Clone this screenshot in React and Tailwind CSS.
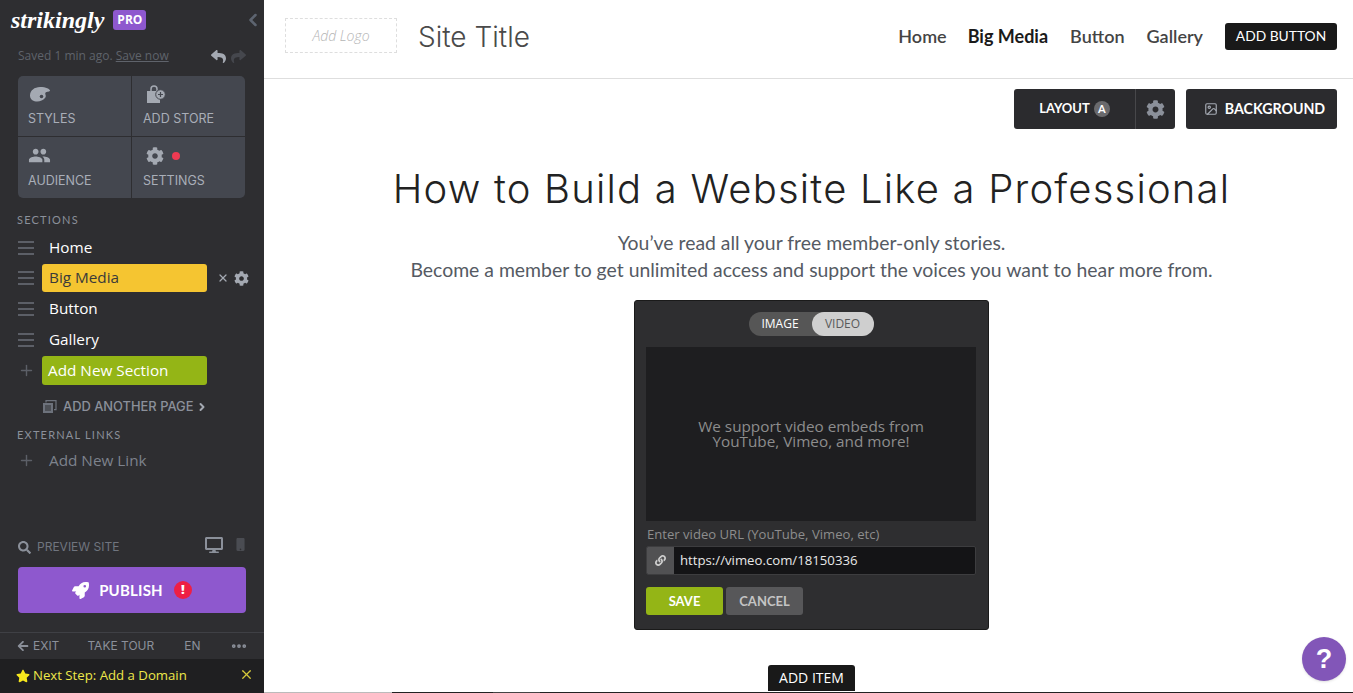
import React from 'react';
import { ChevronLeft, ChevronRight, X, Plus, Ellipsis, Image } from 'lucide-react';
import { FaReply, FaShare, FaCog, FaSearch, FaRocket, FaStar, FaArrowLeft, FaLink, FaDesktop, FaMobile } from 'react-icons/fa';
import { MdPeople } from 'react-icons/md';

const open = "font-['Open_Sans',sans-serif]";
const lato = "font-['Lato',sans-serif]";
const mont = "font-['Inter',sans-serif]";

function Palette() {
    return (
        <svg width="24" height="20" viewBox="0 0 24 20" className="block">
            <path fill="#a4a9b2" d="M12 2c6 0 10 2.200 10 3.600 0 1.500-3.500.9-4.500 2.100-1 1.300 1.500 3-.5 5.300C15 15.300 11.500 17 8 16.500 4 16 2 13.500 2 10.500 2 5.500 6.500 2 12 2z" />
            <circle cx="13.500" cy="11.500" r="1.800" fill="#44474f" />
        </svg>
    );
}

function StoreBag() {
    return (
        <svg width="22" height="20" viewBox="0 0 22 20" className="block">
            <path fill="none" stroke="#a4a9b2" strokeWidth="1.500" d="M6 6V4a3 3 0 0 1 6 0v2" />
            <path fill="#a4a9b2" d="M2 6h13v12H2z" />
            <circle cx="15.500" cy="9.500" r="4.800" fill="#a4a9b2" stroke="#44474f" strokeWidth="1" />
            <path stroke="#44474f" strokeWidth="1.200" d="M13 9.500h5M15.500 7v5" />
        </svg>
    );
}

function Cell({ icon, label, extra, pad = 'pl-[10px]', iconGap = 'mt-[6px] pl-0', labelGap = 'mt-[4px]' }) {
    return (
        <div className={`${pad} flex flex-col`}>
            <div className={`h-[25px] ${iconGap} flex items-center gap-[8px]`}>
                {icon}
                {extra}
            </div>
            <span className={`${mont} text-[12.500px] text-[#a9aeb8] ${labelGap} leading-4`}>{label}</span>
        </div>
    );
}

function Handle() {
    return (
        <div className="w-[16px] flex flex-col gap-[4px] shrink-0">
            <div className="h-[2px] bg-[#5c5f67]" />
            <div className="h-[2px] bg-[#5c5f67]" />
            <div className="h-[2px] bg-[#5c5f67]" />
        </div>
    );
}

function SectionRow({ label }) {
    return (
        <div className="h-[31px] flex items-center pl-[18px]">
            <Handle />
            <span className="ml-[15px] text-[15.300px] text-white">{label}</span>
        </div>
    );
}

function Sidebar() {
    return (
        <aside className={`${open} w-[264px] shrink-0 h-full bg-[#2e2e31] flex flex-col relative`}>
            <div className="h-[39px] flex items-center pl-[11px] pr-[1px]">
                <span className="font-['Liberation_Serif',serif] italic font-bold text-[24px] leading-none text-white">strikingly</span>
                <span className="ml-[9px] w-[33px] h-[20px] rounded-[3px] bg-[#8e58ce] text-white text-[12px] font-bold flex items-center justify-center">PRO</span>
                <ChevronLeft size={20} strokeWidth={3} className="ml-auto text-[#5d6470]" />
            </div>
            <div className="h-[30px] mt-[2px] flex items-center pl-[18px] pr-[18px] text-[12px] text-[#5f636b]">
                <span>Saved 1 min ago. <span className="underline">Save now</span></span>
                <FaReply size={15} className="ml-auto text-[#a4a9b2]" />
                <FaShare size={15} className="ml-[5px] text-[#45474d]" />
            </div>
            <div className="ml-[18px] mt-[5px] w-[227px] h-[122px] grid grid-cols-2 grid-rows-[60px_61px] gap-px bg-[#2e2e31] rounded-[5px] overflow-hidden [&>div]:bg-[#44474f]">
                <Cell icon={<Palette />} label="STYLES" />
                <Cell icon={<StoreBag />} label="ADD STORE" pad="pl-[11px]" iconGap="mt-[6px] pl-[2px]" />
                <Cell icon={<MdPeople size={23} className="text-[#a4a9b2]" />} label="AUDIENCE" labelGap="mt-[5px]" />
                <Cell
                    icon={<FaCog size={18} className="text-[#a4a9b2]" />}
                    label="SETTINGS"
                    pad="pl-[11px]"
                    iconGap="mt-[6px] pl-[3px]"
                    labelGap="mt-[5px]"
                    extra={<span className="w-[8px] h-[8px] rounded-full bg-[#ee3a52]" />}
                />
            </div>
            <div className={`${lato} ml-[17px] mt-[15px] text-[11px] tracking-[1.200px] text-[#8b909a] leading-[14px]`}>SECTIONS</div>
            <div className="mt-[5px]">
                <SectionRow label="Home" />
                <div className="h-[30px] flex items-center pl-[18px]">
                    <Handle />
                    <div className="ml-[8px] w-[165px] h-[28px] rounded-[3px] bg-[#f5c531] text-[#3a3a3a] text-[15.300px] pl-[7px] pb-[2px] flex items-center">Big Media</div>
                    <X size={12} strokeWidth={2.500} className="ml-[10px] text-[#a4a9b2]" />
                    <FaCog size={15} className="ml-[5px] text-[#a4a9b2]" />
                </div>
                <SectionRow label="Button" />
                <SectionRow label="Gallery" />
                <div className="h-[31px] flex items-center pl-[18px]">
                    <Plus size={17} strokeWidth={2} className="text-[#5c5f67] shrink-0" />
                    <div className="ml-[7px] w-[165px] h-[29px] rounded-[3px] bg-[#94b516] text-white text-[15.300px] pl-[6px] flex items-center">Add New Section</div>
                </div>
            </div>
            <div className="flex items-center pl-[42px] mt-[11px] h-[19px]">
                <svg width="15" height="14" viewBox="0 0 15 14" className="block">
                    <path fill="none" stroke="#6d727c" strokeWidth="1.200" d="M4 2.500V.7h10v9h-2" />
                    <path fill="#6d727c" d="M1 3h10v10H1z" />
                    <path stroke="#2e2e31" d="M3 6h6M3 8h6M3 10h6" />
                </svg>
                <span className={`${mont} ml-[6px] text-[12.900px] font-medium text-[#8b909a]`}>ADD ANOTHER PAGE</span>
                <ChevronRight size={12} strokeWidth={4} className="ml-[2px] text-[#a4a9b2]" />
            </div>
            <div className={`${lato} ml-[17px] mt-[12px] text-[11px] tracking-[1.200px] text-[#8b909a] leading-[14px]`}>EXTERNAL LINKS</div>
            <div className="h-[30px] mt-[3px] flex items-center pl-[18px]">
                <Plus size={17} strokeWidth={2} className="text-[#5c5f67] shrink-0" />
                <span className="ml-[14px] text-[15.300px] text-[#7d828c]">Add New Link</span>
            </div>

            <div className="mt-auto">
                <div className="flex items-center pl-[18px] pr-[17px] h-[20px]">
                    <FaSearch size={13} className="text-[#8b909a]" />
                    <span className={`${mont} ml-[6px] text-[12px] text-[#70757f]`}>PREVIEW SITE</span>
                    <FaDesktop size={18} className="ml-auto -mt-[5px] text-[#8b909a]" />
                    <FaMobile size={13} className="ml-[11px] -mt-[5px] text-[#4a4c52]" />
                </div>
                <div className="ml-[18px] mt-[10px] w-[228px] h-[46px] rounded-[4px] bg-[#8e58ce] flex items-center justify-center text-white">
                    <FaRocket size={17} />
                    <span className={`${lato} ml-[10px] text-[15px] font-bold tracking-[0.200px]`}>PUBLISH</span>
                    <span className="ml-[11px] w-[18px] h-[18px] rounded-full bg-[#ee1f44] text-white text-[13px] font-extrabold flex items-center justify-center">!</span>
                </div>
                <div className="mt-[19px] h-[27px] border-t border-[#3f4045] flex items-center pl-[17px] pr-[8px] text-[12px] text-[#8b909a]">
                    <FaArrowLeft size={12} />
                    <span className={`${mont} ml-[4px]`}>EXIT</span>
                    <span className={`${mont} ml-[28px]`}>TAKE TOUR</span>
                    <span className={`${mont} ml-[30px]`}>EN</span>
                    <Ellipsis size={18} strokeWidth={3} className="ml-auto mr-[8px]" />
                </div>
                <div className="h-[34px] bg-[#1f1f21] flex items-center pl-[16px] pr-[10px] text-[13.200px] text-[#eee84a]">
                    <FaStar size={14} className="text-[#f6e71d]" />
                    <span className="ml-[3px]">Next Step: Add a Domain</span>
                    <X size={15} strokeWidth={2} className="ml-auto -mt-[3px] text-[#d5c93a]" />
                </div>
            </div>
        </aside>
    );
}

function Header() {
    return (
        <header className="h-[79px] shrink-0 border-b border-[#dedede] flex items-center pb-[5px] pl-[21px] pr-[16px]">
            <div className={`${open} -mt-[3px] w-[112px] h-[35px] border border-dashed border-[#dedede] flex items-center justify-center italic font-light text-[14px] text-[#b4b4b4]`}>Add Logo</div>
            <div className={`${mont} ml-[21px] text-[28px] font-light text-[#4a4a4a]`}>Site Title</div>
            <nav className={`${lato} ml-auto flex items-center text-[18px] text-[#444]`}>
                <span className="font-semibold">Home</span>
                <span className="ml-[21px] font-bold text-[#1a1a1a]">Big Media</span>
                <span className="ml-[22px] font-semibold">Button</span>
                <span className="ml-[22px] font-semibold">Gallery</span>
                <span className="ml-[22px] w-[112px] h-[27px] rounded-[3px] bg-[#191919] text-white text-[13.800px] flex items-center justify-center">ADD BUTTON</span>
            </nav>
        </header>
    );
}

function VideoPanel() {
    return (
        <div className={`${open} w-[355px] h-[330px] rounded-[3px] bg-[#2e2e30] border border-[#1a1a1a] flex flex-col pl-[11px] pr-[12px] mx-auto mt-[17px]`}>
            <div className="mt-[11px] self-center w-[125px] h-[24px] rounded-full bg-[#565656] flex text-[12px]">
                <span className="w-[63px] flex items-center justify-center text-white">IMAGE</span>
                <span className="w-[62px] rounded-full bg-[#cfcfcf] flex items-center justify-center text-[#5a5a5a]">VIDEO</span>
            </div>
            <div className="mt-[11px] h-[174px] bg-[#1e1e20] flex items-center justify-center text-center text-[15.300px] leading-[15px] text-[#8d8d8d]">
                <p>We support video embeds from<br />YouTube, Vimeo, and more!</p>
            </div>
            <div className="mt-[5px] text-[13.100px] leading-[17px] pl-px text-[#8d8d8d]">Enter video URL (YouTube, Vimeo, etc)</div>
            <div className="mt-[3px] h-[29px] flex rounded-[2px] border border-[#3d3d3f] bg-[#141416] overflow-hidden">
                <span className="w-[27px] bg-[#515153] flex items-center justify-center">
                    <FaLink size={11} className="text-[#cfcfcf]" />
                </span>
                <span className="pl-[6px] flex items-center text-[13.200px] text-[#e8e8e8]">https://vimeo.com/18150336</span>
            </div>
            <div className={`${lato} mt-[12px] flex gap-[3px] text-[13px] font-bold`}>
                <span className="w-[77px] h-[28px] pt-px rounded-[3px] bg-[#94b516] text-white flex items-center justify-center">SAVE</span>
                <span className="w-[77px] h-[28px] pt-px rounded-[3px] bg-[#575759] text-[#c4c4c4] flex items-center justify-center">CANCEL</span>
            </div>
        </div>
    );
}

export default function App() {
    return (
        <div className="h-screen w-full flex overflow-hidden bg-white">
            <Sidebar />
            <main className="flex-1 min-w-0 flex flex-col relative">
                <Header />
                <div className="flex justify-end gap-[11px] pr-[16px] mt-[10px] text-white">
                    <div className="w-[161px] h-[40px] rounded-[3px] bg-[#2b2b2e] flex items-center">
                        <div className={`${lato} w-[122px] h-full border-r border-[#47474a] flex items-center justify-center gap-[4px] text-[13px] font-bold`}>
                            LAYOUT
                            <span className="w-[16px] h-[16px] rounded-full bg-[#6a6a6d] text-[11px] flex items-center justify-center">A</span>
                        </div>
                        <FaCog size={19} className="ml-[10px] text-[#8b909a]" />
                    </div>
                    <div className="w-[151px] h-[40px] pl-[6px] rounded-[3px] bg-[#2b2b2e] flex items-center justify-center gap-[7px]">
                        <Image size={14} className="text-[#a4a9b2]" />
                        <span className={`${lato} text-[14.200px] font-bold`}>BACKGROUND</span>
                    </div>
                </div>
                <div className="pl-[6px]">
                    <h1 className={`${mont} mt-[33px] text-center text-[40px] tracking-[1.200px] leading-[54px] font-light text-[#222]`}>How to Build a Website Like a Professional</h1>
                    <p className={`${lato} mt-[13px] text-center text-[19.400px] leading-[27px] text-[#555a63]`}>
                        You’ve read all your free member-only stories.<br />
                        Become a member to get unlimited access and support the voices you want to hear more from.
                    </p>
                    <VideoPanel />
                    <div className={`${open} mx-auto mt-[35px] w-[87px] h-[26px] pb-px rounded-t-[3px] bg-[#191919] text-white text-[14px] flex items-center justify-center`}>ADD ITEM</div>
                </div>
                <div className="absolute right-[7px] bottom-[12px] w-[44px] h-[44px] rounded-full bg-[#8256b8] shadow text-white text-[27px] font-['Liberation_Sans',sans-serif] font-bold flex items-center justify-center">?</div>
                <div className="absolute left-0 right-0 bottom-0 h-px flex">
                    <div className="w-[128px] bg-[#bbbbbb]" />
                    <div className="w-[101px] bg-[#222222]" />
                    <div className="w-[47px] bg-[#444444]" />
                    <div className="flex-1 bg-[#222222]" />
                </div>
            </main>
        </div>
    );
}
